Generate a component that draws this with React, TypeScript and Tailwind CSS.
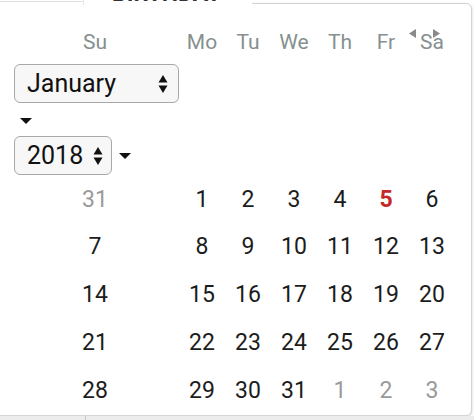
import React from "react";

const WEEKDAYS = ["Mo", "Tu", "We", "Th", "Fr", "Sa"];

// each week: [sunday, mon..sat]; `o` marks days outside the month
const WEEKS: { d: number; o?: boolean; sel?: boolean }[][] = [
  [{ d: 31, o: true }, { d: 1 }, { d: 2 }, { d: 3 }, { d: 4 }, { d: 5, sel: true }, { d: 6 }],
  [{ d: 7 }, { d: 8 }, { d: 9 }, { d: 10 }, { d: 11 }, { d: 12 }, { d: 13 }],
  [{ d: 14 }, { d: 15 }, { d: 16 }, { d: 17 }, { d: 18 }, { d: 19 }, { d: 20 }],
  [{ d: 21 }, { d: 22 }, { d: 23 }, { d: 24 }, { d: 25 }, { d: 26 }, { d: 27 }],
  [{ d: 28 }, { d: 29 }, { d: 30 }, { d: 31 }, { d: 1, o: true }, { d: 2, o: true }, { d: 3, o: true }],
];

function UpDown() {
  return (
    <svg width="10" height="20" viewBox="0 0 10 20">
      <polygon points="5,1 9.5,8.5 0.5,8.5" fill="#111" />
      <polygon points="0.5,11.5 9.5,11.5 5,19" fill="#111" />
    </svg>
  );
}

function Caret() {
  return (
    <svg width="12" height="6" viewBox="0 0 12 6">
      <polygon points="0,0 12,0 6,6" fill="#111" />
    </svg>
  );
}

function dayClass(day: { o?: boolean; sel?: boolean }) {
  if (day.sel) return "font-bold text-[#c62828]";
  if (day.o) return "text-[#9a9a9a]";
  return "text-[#1c1c1c]";
}

export default function App() {
  return (
    <div className="relative h-[420px] w-[474px] overflow-hidden bg-white font-['Roboto',sans-serif]">
      {/* bits of the page behind the popup */}
      <div className="absolute left-0 top-0 h-[5px] w-[252px] overflow-hidden bg-white">
        <div className="h-[1px] w-[84px] translate-y-[1px] bg-[#e2e2e2]" />
        <div className="absolute left-[83px] top-0 h-[5px] w-[1px] bg-[#e6e6e6]" />
        <div className="absolute left-[112px] top-[-18px] text-[23px] font-bold leading-[24px] text-[#333]">
          BIRTHDAY
        </div>
      </div>

      <div className="h-[3px]" />

      {/* popup */}
      <div className="-ml-[10px] h-[413px] w-[482px] rounded-md border border-[#d4d4d4] bg-white shadow-[0_1px_3px_rgba(0,0,0,0.18)]">
        <div className="relative flex h-[50px] items-end pl-[81px] text-[21px] leading-[24px] text-[#869090]">
          <div className="flex h-[24px] w-[46px] items-center justify-center">Su</div>
          <div className="w-[61px]" />
          {WEEKDAYS.map((w) => (
            <div key={w} className="flex h-[24px] w-[46px] items-center justify-center">
              {w}
            </div>
          ))}
          {/* month navigation */}
          <svg width="8" height="9" viewBox="0 0 8 9" className="absolute left-[418px] top-[25px]">
            <polygon points="7,0 7,9 0,4.5" fill="#8a8a8a" />
          </svg>
          <svg width="8" height="9" viewBox="0 0 8 9" className="absolute left-[441px] top-[25px]">
            <polygon points="1,0 1,9 8,4.5" fill="#8a8a8a" />
          </svg>
        </div>

        <div className="pl-[23px]">
          <div className="mt-[10px] flex h-[39px] w-[165px] items-center justify-between rounded-md border border-[#a8a8a8] bg-[#f7f7f7] pl-[12px] pr-[10px] text-[25px] text-[#111]">
            <span>January</span>
            <UpDown />
          </div>
          <div className="mt-[15px] flex h-[6px] pl-[6px]">
            <Caret />
          </div>
          <div className="mt-[12px] flex items-center gap-[7px]">
            <div className="flex h-[39px] w-[98px] items-center justify-between rounded-md border border-[#a8a8a8] bg-[#f7f7f7] pl-[12px] pr-[8px] text-[25px] text-[#111]">
              <span>2018</span>
              <UpDown />
            </div>
            <Caret />
          </div>
        </div>

        <div className="pt-[1px] pl-[81px] text-[23px]">
          {WEEKS.map((week, i) => (
            <div key={i} className="flex h-[47.8px] items-center">
              {week.map((day, j) => (
                <React.Fragment key={j}>
                  <div className={`flex w-[46px] items-center justify-center ${dayClass(day)}`}>
                    {day.d}
                  </div>
                  {j === 0 && <div className="w-[61px]" />}
                </React.Fragment>
              ))}
            </div>
          ))}
        </div>
      </div>

      {/* strip below the popup */}
      <div className="relative h-[4px] bg-[#ececec]">
        <div className="absolute left-[85px] top-0 h-[4px] w-[1px] bg-[#c8c8c8]" />
      </div>
    </div>
  );
}
